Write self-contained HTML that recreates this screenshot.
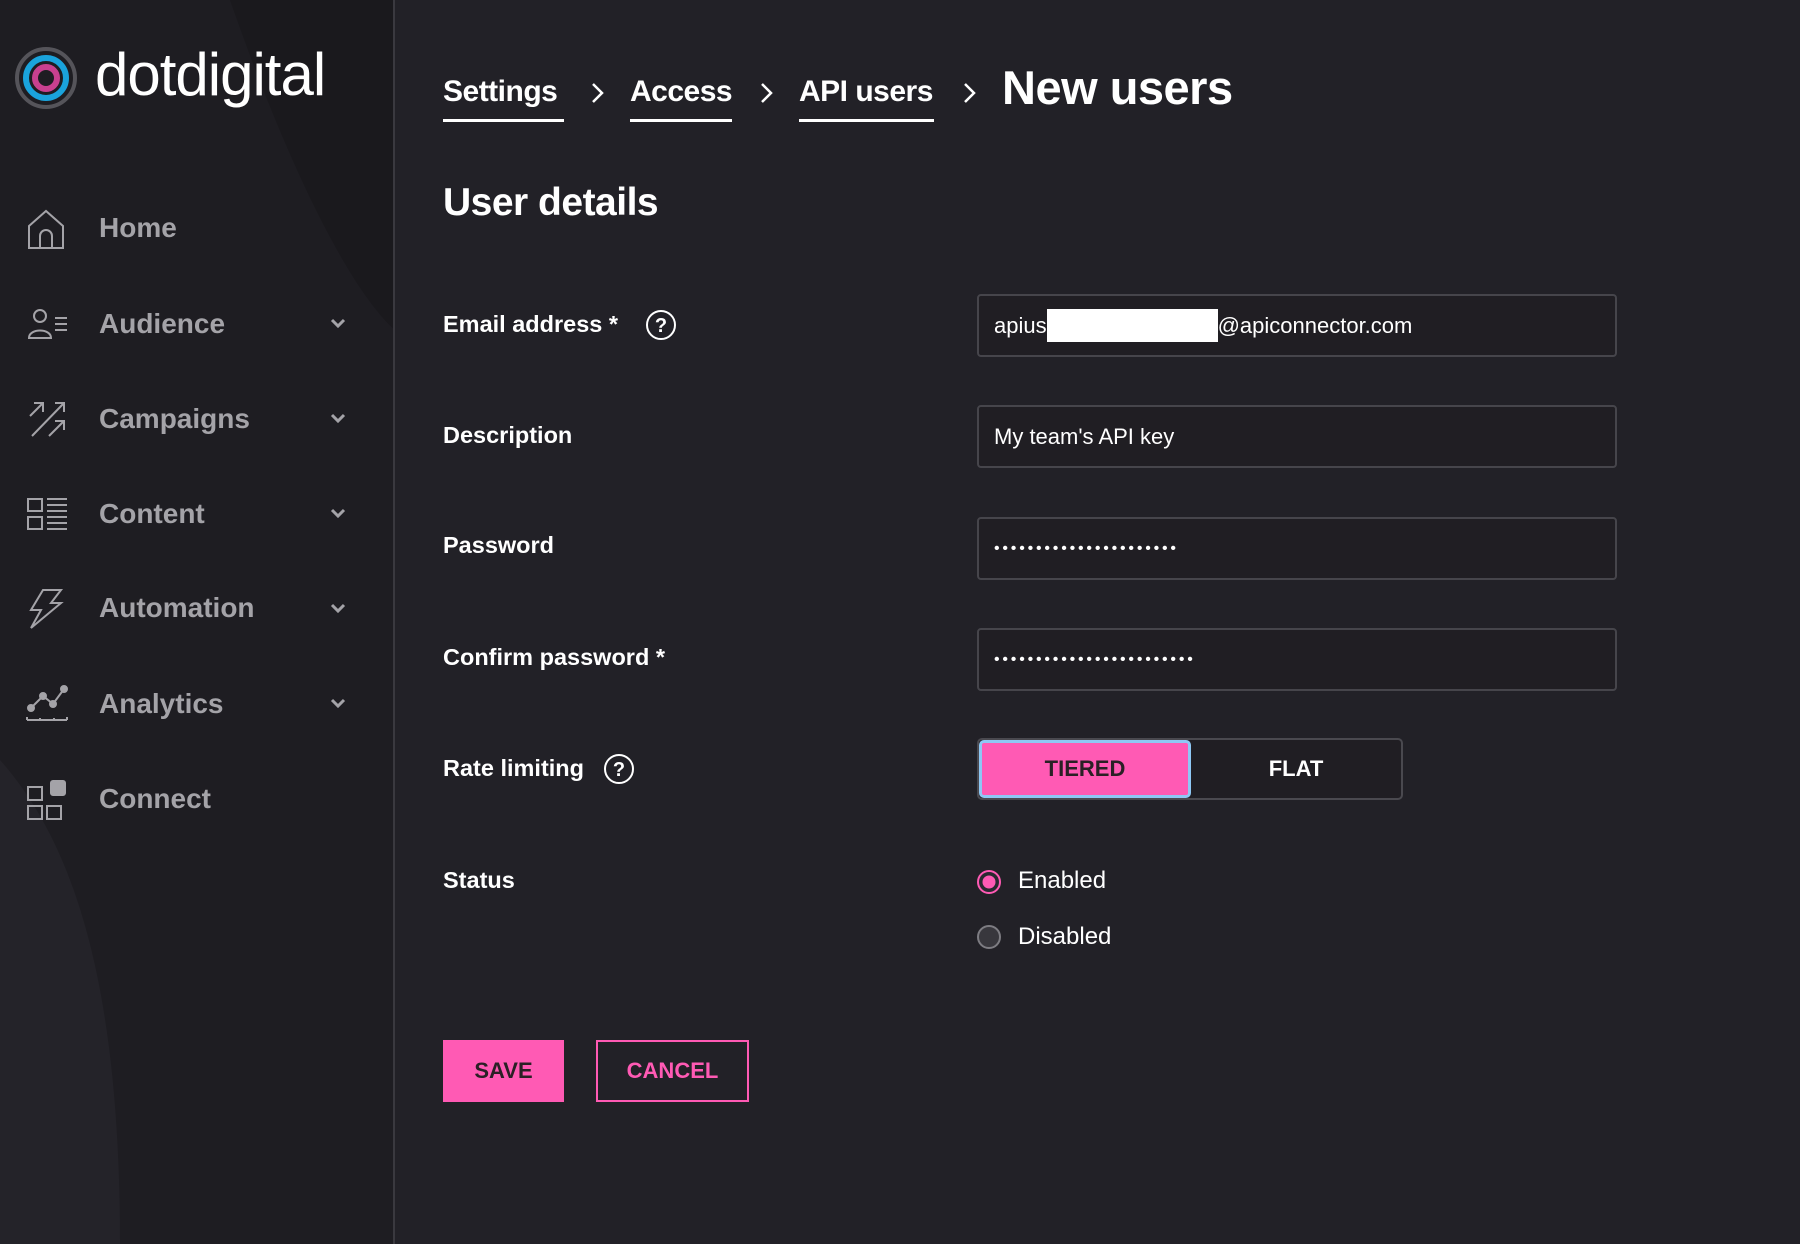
<!DOCTYPE html>
<html><head><meta charset="utf-8"><style>
*{box-sizing:border-box;margin:0;padding:0}
html,body{width:1800px;height:1244px;overflow:hidden;background:#222127;font-family:"Liberation Sans",Arial,sans-serif;color:#fff}
.side{position:absolute;left:0;top:0;width:395px;height:1244px;background:#1e1d22;border-right:2px solid #3a393f;overflow:hidden}
.abs{position:absolute}
.nav{position:absolute;left:99px;font-size:28px;font-weight:bold;color:#a4a3a8;line-height:1}
.chev{position:absolute;left:330px}
.bc{position:absolute;font-size:30px;font-weight:bold;line-height:1;top:77px;padding-bottom:12px;border-bottom:3px solid #fff;white-space:nowrap;letter-spacing:-0.5px}
.lbl{position:absolute;left:443px;font-size:23.5px;font-weight:bold;line-height:1;white-space:nowrap}
.inp{position:absolute;left:977px;width:640px;height:63px;border:2px solid #46454b;border-radius:4px;background:#201e23;font-size:22px;line-height:59px;padding-left:15px;white-space:nowrap}
.dots{font-size:16px;letter-spacing:2.8px}
</style></head><body>
<div class="side">
<svg class="abs" style="left:0;top:0" width="395" height="1244"><path d="M230 0 C300 200 360 300 395 330 L395 0Z" fill="#1a191d"/><path d="M0 760 C80 850 120 1000 120 1244 L0 1244Z" fill="#242329"/></svg>
<svg class="abs" style="left:14px;top:46px" width="64" height="64"><circle cx="32" cy="32" r="29" fill="none" stroke="#55545a" stroke-width="4"/><circle cx="32" cy="32" r="20" fill="none" stroke="#1aa3dc" stroke-width="6"/><circle cx="32" cy="32" r="11" fill="none" stroke="#c8408f" stroke-width="6"/><circle cx="32" cy="32" r="4" fill="#1e1d22"/></svg>
<div class="abs" style="left:95px;top:40px;font-size:60px;color:#fff;letter-spacing:-1px">dotdigital</div>
<svg class="abs" style="left:27px;top:208px" width="40" height="42" fill="none" stroke="#a4a3a8" stroke-width="2"><path d="M2 18 L19 3 L36 18 V40 H2Z"/><path d="M13 40 V28 a6 6 0 0 1 12 0 V40"/></svg>
<div class="nav" style="top:214px">Home</div>
<svg class="abs" style="left:27px;top:308px" width="42" height="32" fill="none" stroke="#a4a3a8" stroke-width="2"><circle cx="13" cy="8" r="6"/><path d="M2 30 c0-10 22-10 22 0Z"/><path d="M28 10h12M28 16h12M28 22h12"/></svg>
<div class="nav" style="top:310px">Audience</div>
<svg class="abs" style="left:27px;top:398px" width="42" height="40" fill="none" stroke="#a4a3a8" stroke-width="2"><path d="M3 18 L16 5 M7 5 h9 v9 M5 38 L37 5 M28 5 h9 v9 M22 38 L37 23 M28 23 h9 v9"/></svg>
<div class="nav" style="top:405px">Campaigns</div>
<svg class="abs" style="left:27px;top:497px" width="42" height="36" fill="none" stroke="#a4a3a8" stroke-width="2"><rect x="1" y="2" width="14" height="12"/><rect x="1" y="20" width="14" height="12"/><path d="M20 2h20M20 8h20M20 14h20M20 20h20M20 26h20M20 32h20"/></svg>
<div class="nav" style="top:500px">Content</div>
<svg class="abs" style="left:27px;top:588px" width="40" height="42" fill="none" stroke="#a4a3a8" stroke-width="2"><path d="M16 2 H34 L24 15 H34 L4 40 L14 22 H4 Z"/></svg>
<div class="nav" style="top:594px">Automation</div>
<svg class="abs" style="left:26px;top:684px" width="42" height="42" fill="#a4a3a8" stroke="#a4a3a8" stroke-width="2"><path fill="none" d="M5 24 L17 12 L27 20 L38 5"/><circle cx="5" cy="24" r="3"/><circle cx="17" cy="12" r="3"/><circle cx="27" cy="20" r="3"/><circle cx="38" cy="5" r="3"/><path fill="none" d="M1 36 H41 M1 33v3 M14 34v2 M28 34v2 M41 33v3"/></svg>
<div class="nav" style="top:690px">Analytics</div>
<svg class="abs" style="left:27px;top:780px" width="42" height="42" fill="none" stroke="#a4a3a8" stroke-width="2"><rect x="1" y="7" width="14" height="13"/><rect x="1" y="26" width="14" height="13"/><rect x="20" y="26" width="14" height="13"/><rect x="24" y="1" width="14" height="14" rx="2" fill="#a4a3a8"/></svg>
<div class="nav" style="top:785px">Connect</div>
<svg class="chev" style="top:318px" width="16" height="12" fill="none" stroke="#a4a3a8" stroke-width="3"><path d="M2 2 L8 8 L14 2"/></svg>
<svg class="chev" style="top:413px" width="16" height="12" fill="none" stroke="#a4a3a8" stroke-width="3"><path d="M2 2 L8 8 L14 2"/></svg>
<svg class="chev" style="top:508px" width="16" height="12" fill="none" stroke="#a4a3a8" stroke-width="3"><path d="M2 2 L8 8 L14 2"/></svg>
<svg class="chev" style="top:603px" width="16" height="12" fill="none" stroke="#a4a3a8" stroke-width="3"><path d="M2 2 L8 8 L14 2"/></svg>
<svg class="chev" style="top:698px" width="16" height="12" fill="none" stroke="#a4a3a8" stroke-width="3"><path d="M2 2 L8 8 L14 2"/></svg>
</div>

<div class="bc" style="left:443px;width:121px">Settings</div>
<div class="bc" style="left:630px;width:102px">Access</div>
<div class="bc" style="left:799px;width:135px">API users</div>
<svg class="abs" style="left:591px;top:82px" width="14" height="22" fill="none" stroke="#fff" stroke-width="2.5"><path d="M2 2 L11 11 L2 20"/></svg>
<svg class="abs" style="left:760px;top:82px" width="14" height="22" fill="none" stroke="#fff" stroke-width="2.5"><path d="M2 2 L11 11 L2 20"/></svg>
<svg class="abs" style="left:963px;top:82px" width="14" height="22" fill="none" stroke="#fff" stroke-width="2.5"><path d="M2 2 L11 11 L2 20"/></svg>
<div class="abs" style="left:1002px;top:64px;font-size:47px;font-weight:bold;line-height:1;letter-spacing:-0.5px;white-space:nowrap">New users</div>
<div class="abs" style="left:443px;top:183px;font-size:39px;font-weight:bold;line-height:1;letter-spacing:-0.5px">User details</div>

<div class="lbl" style="top:313px">Email address *</div>
<svg class="abs" style="left:645px;top:309px" width="32" height="32"><circle cx="16" cy="16" r="14" fill="none" stroke="#fff" stroke-width="2"/><text x="16" y="23" text-anchor="middle" font-size="20" font-weight="bold" fill="#fff" font-family="Liberation Sans">?</text></svg>
<div class="lbl" style="top:424px">Description</div>
<div class="lbl" style="top:534px">Password</div>
<div class="lbl" style="top:646px">Confirm password *</div>
<div class="lbl" style="top:757px">Rate limiting</div>
<svg class="abs" style="left:603px;top:753px" width="32" height="32"><circle cx="16" cy="16" r="14" fill="none" stroke="#fff" stroke-width="2"/><text x="16" y="23" text-anchor="middle" font-size="20" font-weight="bold" fill="#fff" font-family="Liberation Sans">?</text></svg>
<div class="lbl" style="top:869px">Status</div>

<div class="inp" style="top:294px">apius<span style="display:inline-block;width:171px;height:33px;background:#fff;vertical-align:middle;margin-top:-4px"></span>@apiconnector.com</div>
<div class="inp" style="top:405px">My team's API key</div>
<div class="inp dots" style="top:517px">••••••••••••••••••••••</div>
<div class="inp dots" style="top:628px">••••••••••••••••••••••••</div>

<div class="abs" style="left:977px;top:738px;width:426px;height:62px;border:2px solid #4a494f;border-radius:5px;background:#201e23"></div>
<div class="abs" style="left:979px;top:740px;width:212px;height:58px;background:#ff5ab4;border:3px solid #8fc8f5;border-radius:5px;color:#2a2025;font-size:22px;font-weight:bold;text-align:center;line-height:52px">TIERED</div>
<div class="abs" style="left:1191px;top:740px;width:210px;height:58px;color:#fff;font-size:22px;font-weight:bold;text-align:center;line-height:58px">FLAT</div>

<svg class="abs" style="left:976px;top:869px" width="26" height="26"><circle cx="13" cy="13" r="11" fill="#2a2930" stroke="#ff5ab4" stroke-width="2"/><circle cx="13" cy="13" r="6.5" fill="#ff5ab4"/></svg>
<div class="abs" style="left:1018px;top:869px;font-size:24px;line-height:1">Enabled</div>
<svg class="abs" style="left:976px;top:924px" width="26" height="26"><circle cx="13" cy="13" r="11" fill="#38373d" stroke="#7d7c82" stroke-width="2"/></svg>
<div class="abs" style="left:1018px;top:925px;font-size:24px;line-height:1">Disabled</div>

<div class="abs" style="left:443px;top:1040px;width:121px;height:62px;background:#ff5ab4;color:#2a2025;font-size:22px;font-weight:bold;text-align:center;line-height:62px">SAVE</div>
<div class="abs" style="left:596px;top:1040px;width:153px;height:62px;border:2px solid #ff5ab4;color:#ff5ab4;font-size:22px;font-weight:bold;text-align:center;line-height:58px">CANCEL</div>
</body></html>
